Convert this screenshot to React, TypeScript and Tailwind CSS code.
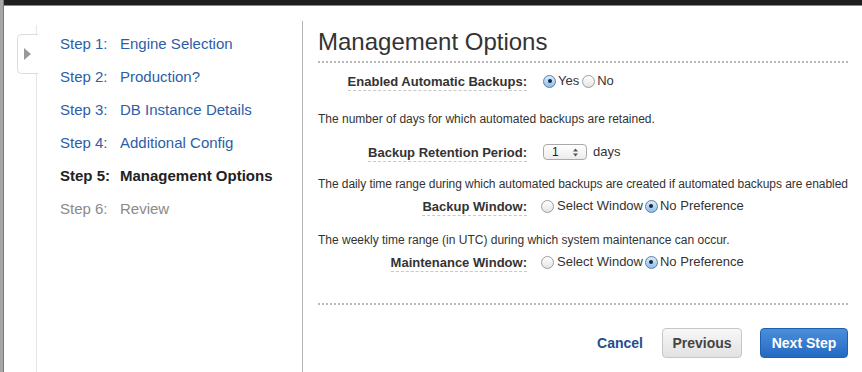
import React from 'react'

const steps = [
  { n: 'Step 1:', name: 'Engine Selection', state: 'link' },
  { n: 'Step 2:', name: 'Production?', state: 'link' },
  { n: 'Step 3:', name: 'DB Instance Details', state: 'link' },
  { n: 'Step 4:', name: 'Additional Config', state: 'link' },
  { n: 'Step 5:', name: 'Management Options', state: 'current' },
  { n: 'Step 6:', name: 'Review', state: 'todo' },
]

function Radio({ checked }: { checked?: boolean }) {
  if (checked) {
    return (
      <span className="inline-flex items-center justify-center w-[13px] h-[13px] rounded-full border border-[#5b7ea6] bg-[linear-gradient(#dcedfc,#8cbdec)] shrink-0">
        <span className="w-[4px] h-[4px] rounded-full bg-[#1c2633]" />
      </span>
    )
  }
  return (
    <span className="inline-block w-[13px] h-[13px] rounded-full border border-[#9c9c9c] bg-[linear-gradient(#ffffff,#e4e4e4)] shrink-0" />
  )
}

function Label({ children }: { children: React.ReactNode }) {
  return (
    <div className="w-[209px] shrink-0 text-right">
      <span className="font-bold text-[13px] text-[#333] border-b border-dashed border-[#c8c8c8] pb-[1px]">
        {children}
      </span>
    </div>
  )
}

function WindowChoice() {
  return (
    <div className="ml-[14px] flex items-center text-[13px] text-[#333]">
      <Radio />
      <span className="ml-[3px] mr-[2px]">Select Window</span>
      <Radio checked />
      <span className="ml-[2px]">No Preference</span>
    </div>
  )
}

export default function App() {
  return (
    <div className="flex h-[372px] w-[862px] overflow-hidden bg-white font-['Liberation_Sans',Arial,sans-serif]">
      <div className="w-[4px] shrink-0 bg-[#a6a6a6] border-r border-[#7a7a7a]" />
      <div className="flex-1 min-w-0 flex flex-col">
        <div className="h-[6px] shrink-0 bg-[#1f1f1f] border-b border-[#8a8a8a]" />
        <div className="flex flex-1 min-w-0">
          {/* sidebar */}
          <div className="relative ml-[32px] mt-[19px] w-[266px] shrink-0 border-l border-[#e6e6e6] pt-[3px] pl-[23px]">
            <div className="absolute left-[-20px] top-[9px] w-[21px] h-[40px] bg-white border border-r-0 border-[#dcdcdc] rounded-l-[5px] flex items-center justify-center">
              <svg width="7" height="12" viewBox="0 0 7 12" className="ml-[-1px]">
                <path d="M0 0 L7 6 L0 12 Z" fill="#9a9a9a" />
              </svg>
            </div>
            {steps.map((s) => (
              <div
                key={s.n}
                className={
                  'flex h-[33px] items-center text-[15px] ' +
                  (s.state === 'current'
                    ? 'font-bold text-[#222]'
                    : s.state === 'todo'
                      ? 'text-[#8a8a8a]'
                      : 'text-[#2c5ea8]')
                }
              >
                <span className="w-[60px] shrink-0">{s.n}</span>
                <span className="whitespace-nowrap">{s.name}</span>
              </div>
            ))}
          </div>

          {/* main */}
          <div className="flex-1 min-w-0 mt-[15px] border-l border-[#b3b3b3] pl-[15px] pr-[14px]">
            <h1 className="mt-[6px] h-[30px] leading-[30px] text-[24px] text-[#333] font-normal">
              Management Options
            </h1>
            <div className="mt-[4px] border-t-2 border-dotted border-[#b8b8b8]" />

            <div className="mt-[7px] flex h-[22px] items-center">
              <Label>Enabled Automatic Backups:</Label>
              <div className="ml-[16px] flex items-center text-[13px] text-[#333]">
                <Radio checked />
                <span className="ml-[2px] mr-[3px]">Yes</span>
                <Radio />
                <span className="ml-[2px]">No</span>
              </div>
            </div>

            <p className="mt-[19px] h-[16px] leading-[16px] text-[12px] text-[#333] whitespace-nowrap">
              The number of days for which automated backups are retained.
            </p>

            <div className="mt-[14px] flex h-[22px] items-center">
              <Label>Backup Retention Period:</Label>
              <div className="ml-[16px] flex items-center">
                <div className="flex h-[16px] w-[44px] items-center justify-between rounded-[4px] border border-[#a9a9a9] bg-[linear-gradient(#ffffff,#ececec)] px-[8px] text-[12px] text-[#222]">
                  <span>1</span>
                  <svg width="5" height="9" viewBox="0 0 5 9">
                    <path d="M0 3.5 L2.5 0.5 L5 3.5 Z M0 5.5 L2.5 8.5 L5 5.5 Z" fill="#555" />
                  </svg>
                </div>
                <span className="ml-[6px] text-[13px] text-[#333]">days</span>
              </div>
            </div>

            <p className="mt-[13px] h-[16px] leading-[16px] text-[12px] tracking-[-0.06px] text-[#333] whitespace-nowrap">
              The daily time range during which automated backups are created if automated backups are enabled
            </p>

            <div className="mt-[3px] flex h-[22px] items-center">
              <Label>Backup Window:</Label>
              <WindowChoice />
            </div>

            <p className="mt-[15px] h-[16px] leading-[16px] text-[12px] text-[#333] whitespace-nowrap">
              The weekly time range (in UTC) during which system maintenance can occur.
            </p>

            <div className="mt-[3px] flex h-[22px] items-center">
              <Label>Maintenance Window:</Label>
              <WindowChoice />
            </div>

            <div className="mt-[30px] border-t-2 border-dotted border-[#b8b8b8]" />

            <div className="mt-[23px] flex items-center justify-end">
              <button className="text-[14px] font-bold text-[#1f4f8f]">Cancel</button>
              <button className="ml-[19px] h-[30px] w-[80px] rounded-[4px] border border-[#c6c6c6] bg-[linear-gradient(#f7f7f7,#e2e2e2)] text-[14px] font-bold text-[#444]">
                Previous
              </button>
              <button className="ml-[18px] h-[30px] w-[88px] rounded-[4px] border border-[#2160ad] bg-[linear-gradient(#4a8fdc,#2469c2)] text-[14px] font-bold text-white">
                Next Step
              </button>
            </div>
          </div>
        </div>
      </div>
    </div>
  )
}
